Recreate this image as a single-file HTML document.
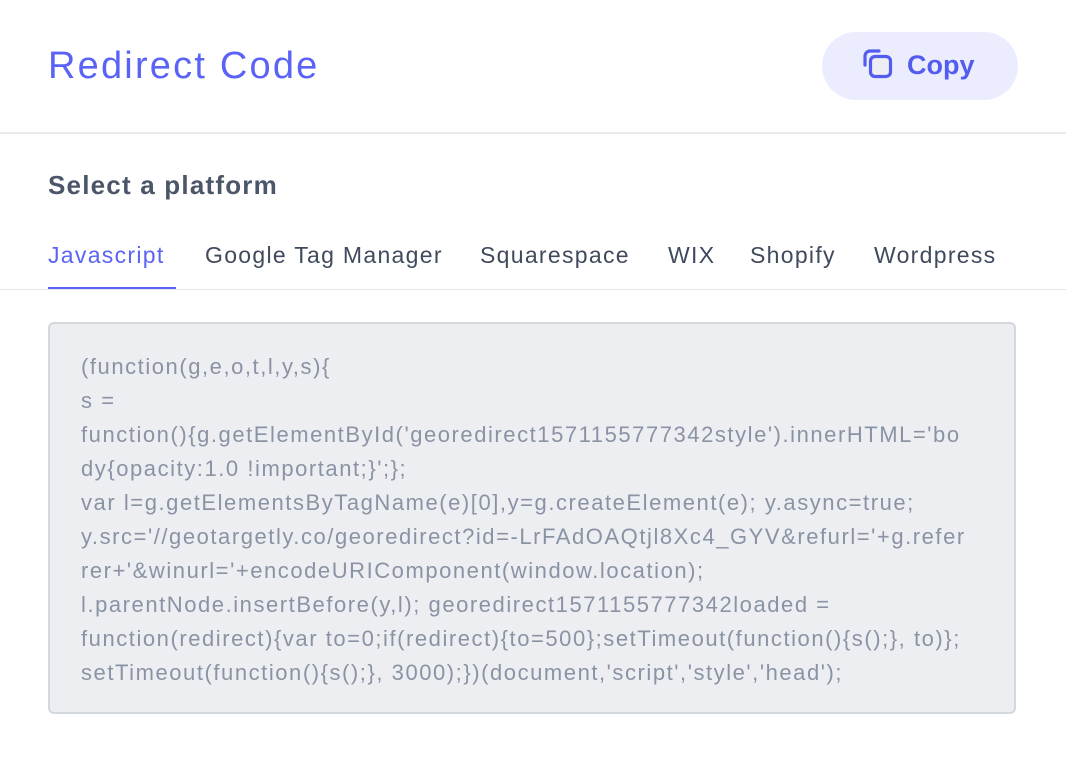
<!DOCTYPE html>
<html><head><meta charset="utf-8"><style>
body{margin:0;width:1066px;height:764px;background:#fff;font-family:"Liberation Sans",sans-serif;position:relative;overflow:hidden}
.t{position:absolute;white-space:nowrap}
h1{position:absolute;left:48px;top:42px;margin:0;font-size:38px;font-weight:400;color:#5a63f5;line-height:48px;letter-spacing:2.2px}
.btn{position:absolute;left:822px;top:32px;width:196px;height:68px;border-radius:34px;background:#ebedfe}
.btn span{position:absolute;left:85px;top:18px;font-size:27px;font-weight:700;color:#545cf0}
.hr1{position:absolute;left:0;top:132px;width:1066px;height:2px;background:#e8eaee}
.sel{left:48px;top:170px;font-size:26px;font-weight:700;color:#4b5669;letter-spacing:1.2px}
.tab{top:242px;font-size:23px;color:#3f4a5c;letter-spacing:1.3px}
.hr2{position:absolute;left:0;top:289px;width:1066px;height:1px;background:#e2e5ea}
.ul{position:absolute;left:48px;top:287px;width:128px;height:2px;background:#5a63f5}
.code{position:absolute;left:48px;top:322px;width:968px;height:392px;box-sizing:border-box;border:2px solid #d3d7de;border-radius:6px;background:#edeef2}
.l{position:absolute;left:81px;font-size:22px;color:#8a93a4;white-space:nowrap;letter-spacing:1.55px}
</style></head><body>
<h1>Redirect Code</h1>
<div class="btn"><svg style="position:absolute;left:40px;top:16px" width="32" height="32" viewBox="0 0 32 32"><path d="M3 17V8a5 5 0 0 1 5-5h9" fill="none" stroke="#545cf0" stroke-width="3.2" stroke-linecap="round"/><rect x="8.5" y="8.5" width="20" height="20" rx="4.5" fill="#eceef3" stroke="#545cf0" stroke-width="3.2"/></svg><span>Copy</span></div>
<div class="hr1"></div>
<div class="t sel">Select a platform</div>
<div class="t tab" style="left:48px;color:#5a63f5">Javascript</div>
<div class="t tab" style="left:205px">Google Tag Manager</div>
<div class="t tab" style="left:480px">Squarespace</div>
<div class="t tab" style="left:668px">WIX</div>
<div class="t tab" style="left:750px">Shopify</div>
<div class="t tab" style="left:874px">Wordpress</div>
<div class="hr2"></div><div class="ul"></div>
<div class="code"></div>
<div class="l" style="top:354px">(function(g,e,o,t,l,y,s){</div>
<div class="l" style="top:388px">s =</div>
<div class="l" style="top:422px">function(){g.getElementById('georedirect1571155777342style').innerHTML='bo</div>
<div class="l" style="top:456px">dy{opacity:1.0 !important;}';};</div>
<div class="l" style="top:490px">var l=g.getElementsByTagName(e)[0],y=g.createElement(e); y.async=true;</div>
<div class="l" style="top:524px">y.src='//geotargetly.co/georedirect?id=-LrFAdOAQtjl8Xc4_GYV&amp;refurl='+g.refer</div>
<div class="l" style="top:558px">rer+'&amp;winurl='+encodeURIComponent(window.location);</div>
<div class="l" style="top:592px">l.parentNode.insertBefore(y,l); georedirect1571155777342loaded =</div>
<div class="l" style="top:626px">function(redirect){var to=0;if(redirect){to=500};setTimeout(function(){s();}, to)};</div>
<div class="l" style="top:660px">setTimeout(function(){s();}, 3000);})(document,'script','style','head');</div>
</body></html>
